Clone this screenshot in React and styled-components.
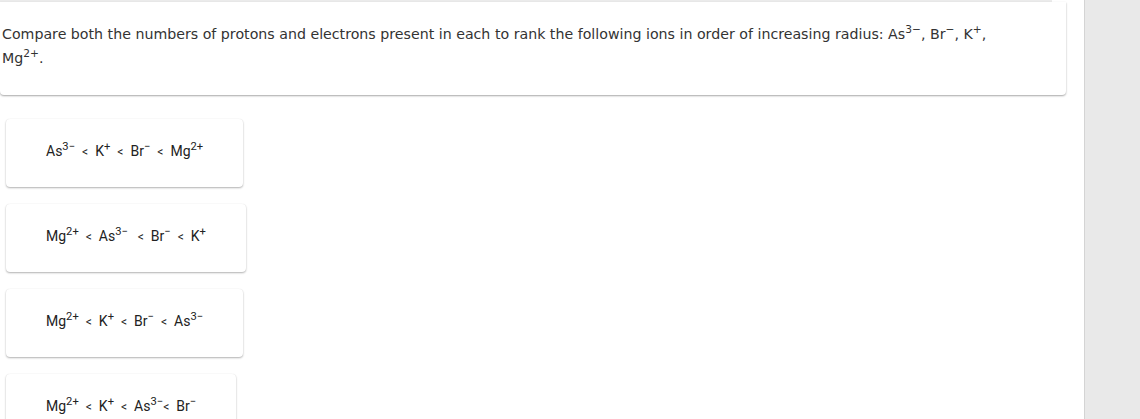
import styled, { createGlobalStyle } from "styled-components";

const GlobalStyle = createGlobalStyle`
  html, body {
    margin: 0;
    padding: 0;
    background: #ffffff;
  }
  body {
    font-family: "DejaVu Sans", "Open Sans", sans-serif;
  }
`;

const Page = styled.div`
  display: flex;
  width: 1140px;
  height: 419px;
  overflow: hidden;
`;

const Main = styled.div`
  flex: 1;
  display: flex;
  flex-direction: column;
`;

const Sidebar = styled.div`
  width: 55px;
  flex-shrink: 0;
  background: #e9e9e9;
  border-left: 1px solid #d4d4d4;
`;

const TopStrip = styled.div`
  flex-shrink: 0;
  width: 1052px;
  height: 2px;
  background: #ebebeb;
`;

const QuestionCard = styled.div`
  flex-shrink: 0;
  width: 1066px;
  height: 93px;
  box-sizing: border-box;
  padding: 20px 2px 0;
  background: #fff;
  border-radius: 0 0 4px 4px;
  box-shadow: 0 1px 2px rgba(0, 0, 0, 0.35);
  font-size: 14.2px;
  line-height: 24px;
  color: #333;
`;

const Sup = styled.sup`
  font-size: ${(p) => (p.$big ? "0.8em" : "0.75em")};
  line-height: 0;
  vertical-align: 0.55em;
`;

const Options = styled.div`
  flex-shrink: 0;
  display: flex;
  flex-direction: column;
  align-items: flex-start;
  gap: 17px;
  padding: 24px 0 0 6px;
`;

const Option = styled.div`
  flex-shrink: 0;
  box-sizing: border-box;
  height: 68px;
  padding: 22px 40px 0;
  background: #fff;
  border-radius: 4px;
  box-shadow: 0 1px 2px rgba(0, 0, 0, 0.3), 0 0 1px rgba(0, 0, 0, 0.08);
  font-family: Roboto, "Liberation Sans", sans-serif;
  font-size: 14px;
  line-height: 20px;
  color: #222;
  white-space: nowrap;
`;

const Lt = styled.span`
  font-size: 12px;
  margin: ${(p) => (p.$tight ? "0 7px 0 0" : "0 7px")};
`;

const options = [
  [["As", "3−"], ["K", "+"], ["Br", "−"], ["Mg", "2+"]],
  [["Mg", "2+"], ["As", "3− "], ["Br", "−"], ["K", "+"]],
  [["Mg", "2+"], ["K", "+"], ["Br", "−"], ["As", "3−"]],
  [["Mg", "2+"], ["K", "+"], ["As", "3−"], ["Br", "−", true]],
];

export default function App() {
  return (
    <>
      <GlobalStyle />
      <Page>
        <Main>
          <TopStrip />
          <QuestionCard>
            Compare both the numbers of protons and electrons present in each
            to rank the following ions in order of increasing radius: As
            <Sup>3−</Sup>, Br<Sup>−</Sup>, K<Sup>+</Sup>,
            <br />
            Mg<Sup>2+</Sup>.
          </QuestionCard>
          <Options>
            {options.map((row, i) => (
              <Option key={i}>
                {row.map(([el, charge, tight], j) => (
                  <span key={j}>
                    {j > 0 && <Lt $tight={tight}>&lt;</Lt>}
                    {el}
                    <Sup $big>{charge}</Sup>
                  </span>
                ))}
              </Option>
            ))}
          </Options>
        </Main>
        <Sidebar />
      </Page>
    </>
  );
}
